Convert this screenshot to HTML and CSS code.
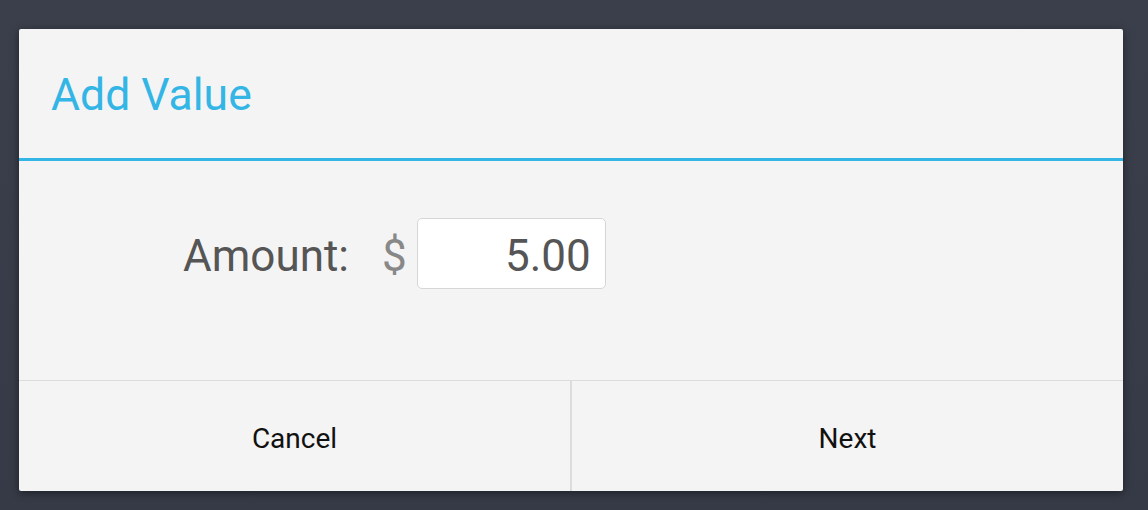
FILE: index.html
```html
<!DOCTYPE html>
<html>
<head>
<meta charset="utf-8">
<link rel="stylesheet" href="styles.css">
</head>
<body>
<div class="dialog">
  <div class="header"><h1 class="title">Add Value</h1></div>
  <div class="content">
    <div class="amount-row">
      <span class="label">Amount:</span>
      <span class="currency">$</span>
      <div class="input">5.00</div>
    </div>
  </div>
  <div class="footer">
    <div class="btn">Cancel</div>
    <div class="btn btn-right">Next</div>
  </div>
</div>
</body>
</html>
```
FILE: styles.css
```css
html, body {
  margin: 0;
  padding: 0;
}
body {
  width: 1148px;
  height: 510px;
  background: linear-gradient(#3a3f4b, #353a46);
  font-family: Roboto, "Noto Sans", sans-serif;
  overflow: hidden;
}
.dialog {
  margin: 29px 0 0 19px;
  width: 1104px;
  height: 462px;
  background: #f4f4f4;
  border-radius: 2px;
  box-shadow: 0 2px 8px rgba(0, 0, 0, 0.45);
  display: flex;
  flex-direction: column;
}
.header {
  height: 129px;
  border-bottom: 3px solid #33b5e5;
  display: flex;
  align-items: center;
  padding-left: 32px;
}
.title {
  margin: 0;
  font-weight: 400;
  font-size: 44.5px;
  color: #33b5e5;
  padding-top: 3px;
}
.content {
  height: 219px;
  box-sizing: border-box;
  padding: 57px 0 0 164px;
}
.amount-row {
  display: flex;
  align-items: center;
  height: 71px;
}
.label {
  font-size: 44px;
  color: #555555;
  margin-right: 33px;
  padding-top: 4px;
}
.currency {
  font-size: 44px;
  color: #888888;
  margin-right: 10px;
  padding-top: 4px;
}
.input {
  width: 189px;
  height: 71px;
  box-sizing: border-box;
  border: 1px solid #d6d6d6;
  border-radius: 5px;
  background: #ffffff;
  font-size: 44px;
  color: #555555;
  display: flex;
  align-items: center;
  justify-content: flex-end;
  padding-right: 14px;
  padding-top: 4px;
}
.footer {
  flex: 1;
  display: flex;
  border-top: 1px solid #dcdcdc;
}
.btn {
  flex: 1;
  display: flex;
  align-items: center;
  justify-content: center;
  font-size: 28px;
  color: #111111;
  padding-top: 4px;
}
.btn-right {
  border-left: 2px solid #dcdcdc;
}
```
